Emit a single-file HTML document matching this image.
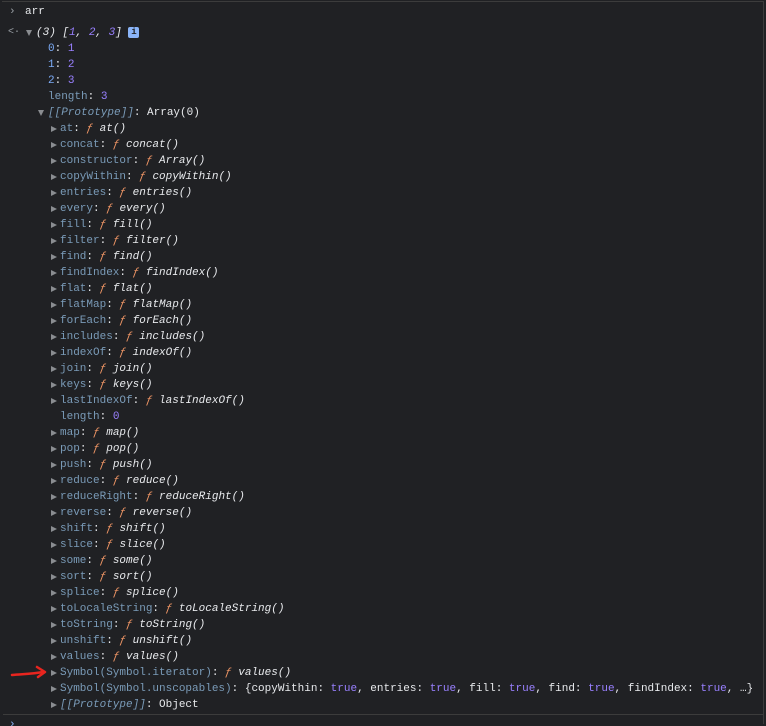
<!DOCTYPE html>
<html><head><meta charset="utf-8"><style>
html,body{margin:0;padding:0;background:#202124;width:766px;height:726px;overflow:hidden;}
body{position:relative;font-family:"Liberation Mono",monospace;font-size:11px;color:#e8eaed;}
.frame{position:absolute;left:2px;top:1px;width:762px;height:723px;border-top:1px solid #3c3c3c;border-right:1px solid #3c3c3c;box-sizing:border-box;}
.r{position:absolute;height:16px;line-height:16px;white-space:pre;}
.k{color:#7cacf8}
.ki{color:#7a9bb8}
.n{color:#9980ff}
.f{color:#f29766;font-style:italic}
.i{font-style:italic}
.pi{color:#7a9bb8;font-style:italic}
.tri{position:absolute;width:0;height:0;border-top:3.5px solid transparent;border-bottom:3.5px solid transparent;border-left:6px solid #8a8d91;}
.trd{position:absolute;width:0;height:0;border-left:3.5px solid transparent;border-right:3.5px solid transparent;border-top:6px solid #8a8d91;}
.sep{position:absolute;left:3px;right:2px;height:1px;background:#3c3c3c;}
.info{display:inline-block;width:11px;height:11px;background:#8ab4f8;color:#202124;border-radius:2px;font-size:9px;line-height:11px;text-align:center;font-weight:bold;font-style:normal;vertical-align:1px;}
</style></head><body>
<div class="frame"></div>
<div class="r" style="left:9px;top:4px;color:#9aa0a6">›</div>
<div class="r" style="left:25px;top:4px">arr</div>
<div class="r" style="left:8px;top:25px;color:#9aa0a6;font-size:10px">&lt;·</div>
<div class="trd" style="left:26px;top:30px"></div>
<div class="r i" style="left:36px;top:25px">(3) [<span class="n">1</span>, <span class="n">2</span>, <span class="n">3</span>] <span class="info">i</span></div>
<div class="r" style="left:48px;top:41px"><span class="k">0</span>: <span class="n">1</span></div>
<div class="r" style="left:48px;top:57px"><span class="k">1</span>: <span class="n">2</span></div>
<div class="r" style="left:48px;top:73px"><span class="k">2</span>: <span class="n">3</span></div>
<div class="r" style="left:48px;top:89px"><span class="ki">length</span>: <span class="n">3</span></div>
<div class="trd" style="left:38px;top:110px"></div>
<div class="r" style="left:48px;top:105px"><span class="pi">[[Prototype]]</span>: Array(0)</div>
<div id="list"></div>
<div class="sep" style="top:714px"></div>
<div class="r" style="left:9px;top:717px;color:#8ab4f8">›</div>
<svg style="position:absolute;left:10px;top:665px" width="40" height="16"><path d="M2 10 C12 9 22 9 33 7" stroke="#e8251f" stroke-width="2.5" fill="none" stroke-linecap="round"/><path d="M27 2 L35 7 L28 12" stroke="#e8251f" stroke-width="2.5" fill="none" stroke-linecap="round" stroke-linejoin="round"/></svg>
<script>
var items=[["at","at()"],["concat","concat()"],["constructor","Array()"],["copyWithin","copyWithin()"],["entries","entries()"],["every","every()"],["fill","fill()"],["filter","filter()"],["find","find()"],["findIndex","findIndex()"],["flat","flat()"],["flatMap","flatMap()"],["forEach","forEach()"],["includes","includes()"],["indexOf","indexOf()"],["join","join()"],["keys","keys()"],["lastIndexOf","lastIndexOf()"],["length",null],["map","map()"],["pop","pop()"],["push","push()"],["reduce","reduce()"],["reduceRight","reduceRight()"],["reverse","reverse()"],["shift","shift()"],["slice","slice()"],["some","some()"],["sort","sort()"],["splice","splice()"],["toLocaleString","toLocaleString()"],["toString","toString()"],["unshift","unshift()"],["values","values()"],["Symbol(Symbol.iterator)","values()"],["Symbol(Symbol.unscopables)","U"],["[[Prototype]]","O"]];
var h="";
items.forEach(function(it,i){
 var top=121+i*16;
 if(it[1]===null){h+='<div class="r" style="left:60px;top:'+top+'px"><span class="ki">length</span>: <span class="n">0</span></div>';return;}
 h+='<div class="tri" style="left:51px;top:'+(top+5)+'px"></div>';
 var v;
 if(it[1]=="U") v='{copyWithin: <span class="n">true</span>, entries: <span class="n">true</span>, fill: <span class="n">true</span>, find: <span class="n">true</span>, findIndex: <span class="n">true</span>, …}';
 else if(it[1]=="O") v='Object';
 else v='<span class="f">ƒ</span> <span class="i">'+it[1]+'</span>';
 var kc=it[1]=="O"?"pi":"ki";
 h+='<div class="r" style="left:60px;top:'+top+'px"><span class="'+kc+'">'+it[0]+'</span>: '+v+'</div>';
});
document.getElementById("list").innerHTML=h;
</script>
</body></html>
